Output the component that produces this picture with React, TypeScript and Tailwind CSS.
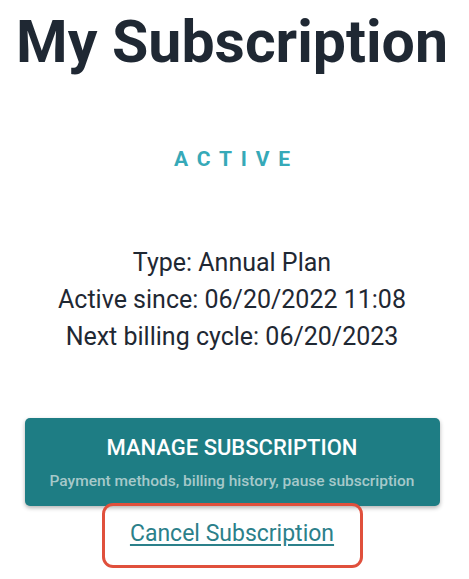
import React from "react";

export default function App() {
  return (
    <div
      className="w-[464px] min-h-[579px] bg-white flex flex-col items-center"
      style={{ fontFamily: "Roboto, 'Liberation Sans', sans-serif" }}
    >
      <h1 className="pt-[12px] text-[59px] leading-[59px] font-bold text-[#1f2833] whitespace-nowrap">
        My Subscription
      </h1>
      <div className="mt-[76px] text-[21px] leading-[24px] font-bold tracking-[0.42em] text-[#36a9b8] pl-[0.42em]">
        ACTIVE
      </div>
      <div className="mt-[73px] text-[25px] leading-[37px] text-[#1f2833] text-center whitespace-nowrap">
        <p>Type: Annual Plan</p>
        <p>Active since: 06/20/2022 11:08</p>
        <p>Next billing cycle: 06/20/2023</p>
      </div>
      <button className="mt-[63px] w-[415px] h-[88px] shrink-0 rounded-[5px] bg-[#1e7d84] shadow-[0_2px_4px_rgba(0,0,0,0.3)] flex flex-col items-center justify-center">
        <span className="text-[22px] leading-[26px] font-medium text-white whitespace-nowrap">
          MANAGE SUBSCRIPTION
        </span>
        <span className="mt-[11px] text-[15.5px] leading-[18px] font-medium text-[#a6c9ca] whitespace-nowrap">
          Payment methods, billing history, pause subscription
        </span>
      </button>
      <div className="-mt-[3px] w-[261px] h-[65px] shrink-0 border-[3.5px] border-[#e0503c] rounded-[11px] flex items-center justify-center pb-[3px]">
        <a href="#" className="text-[23px] leading-[26px] text-[#2b808a] underline underline-offset-[3px] whitespace-nowrap">
          Cancel Subscription
        </a>
      </div>
    </div>
  );
}
